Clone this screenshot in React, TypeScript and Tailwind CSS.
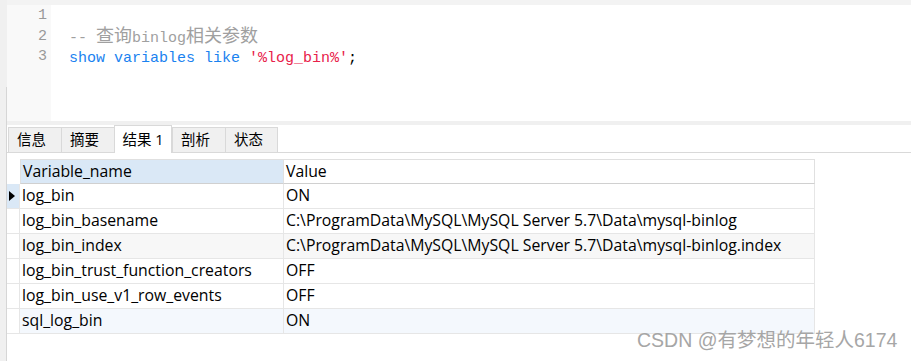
const rows = [
  { name: 'log_bin', value: 'ON', bg: 'bg-white', current: true },
  {
    name: 'log_bin_basename',
    value: 'C:\\ProgramData\\MySQL\\MySQL Server 5.7\\Data\\mysql-binlog',
    bg: 'bg-white',
  },
  {
    name: 'log_bin_index',
    value: 'C:\\ProgramData\\MySQL\\MySQL Server 5.7\\Data\\mysql-binlog.index',
    bg: 'bg-[#f7f7f7]',
  },
  { name: 'log_bin_trust_function_creators', value: 'OFF', bg: 'bg-white' },
  { name: 'log_bin_use_v1_row_events', value: 'OFF', bg: 'bg-white' },
  { name: 'sql_log_bin', value: 'ON', bg: 'bg-[#f4f8fd]' },
]

const tabs = ['信息', '摘要', '结果 1', '剖析', '状态']

const uiFont = "font-['Segoe_UI','Open_Sans','Noto_Sans_CJK_SC',sans-serif]"

export default function App() {
  return (
    <div className="relative flex h-[361px] w-[911px] overflow-hidden bg-white text-black">
      {/* Left frame strip */}
      <div className="flex w-[7px] flex-col bg-[#f0f0f0]">
        <div className="h-[87px]" />
        <div className="flex-1 border-r border-[#d6d6d6]" />
      </div>

      <div className="flex flex-1 flex-col">
        <div className="h-[5px] bg-[#f3f3f3]" />

        {/* Editor */}
        <div className="flex h-[116px] pt-[1px] font-['Liberation_Mono','Noto_Sans_CJK_SC',monospace] text-[15px] leading-[20.5px]">
          <div className="-mt-[1px] w-[44px] bg-[#f9f9f9] pt-[1px] pr-[4px] text-right text-[#999]">
            <div>1</div>
            <div>2</div>
            <div>3</div>
          </div>
          <div className="flex-1 pl-[18px]">
            <div>&nbsp;</div>
            <div className="text-[#a0a0a0]">
              -- <span className="text-[18px] leading-[20px]">查询</span>binlog
              <span className="text-[18px] leading-[20px]">相关参数</span>
            </div>
            <div>
              <span className="text-[#1a82f0]">show variables like </span>
              <span className="text-[#e8214a]">'%log_bin%'</span>
              <span>;</span>
            </div>
          </div>
        </div>

        <div className="h-[4px] bg-[#f0f0f0]" />

        {/* Tabs */}
        <div className={`flex h-[28px] items-end border-b border-[#d9d9d9] pl-[1px] text-[14.5px] ${uiFont}`}>
          {tabs.map((t, i) =>
            i === 2 ? (
              <div
                key={t}
                className="-mb-px flex h-[28px] w-[58px] items-center justify-center border border-b-0 border-[#d9d9d9] bg-white"
              >
                {t}
              </div>
            ) : (
              <div
                key={t}
                className="flex h-[25px] w-[53px] items-center pl-[8px] border border-b-0 border-r-0 border-[#d9d9d9] bg-[#f0f0f0] last:border-r"
              >
                {t}
              </div>
            )
          )}
        </div>

        {/* Result grid */}
        <div className={`mt-[6px] text-[15.8px] ${uiFont}`}>
          <div className="flex h-[25px]">
            <div className="w-[13px]" />
            <div className="flex w-[263px] items-center border-y border-l border-[#e0e0e0] border-b-[#d0d0d0] bg-[#dae8f6] pl-[2px]">
              Variable_name
            </div>
            <div className="flex w-[532px] items-center border border-[#e0e0e0] border-b-[#d0d0d0] pl-[2px]">
              Value
            </div>
          </div>
          {rows.map((r) => (
            <div key={r.name} className="flex h-[25px]">
              <div
                className={`flex w-[13px] items-center border-b border-r border-[#e6e6e6] ${
                  r.current ? 'bg-[#dae8f6]' : 'bg-white'
                }`}
              >
                {r.current && (
                  <svg width="6" height="10" viewBox="0 0 6 10" className="ml-[2px]">
                    <path d="M0 0 L6 5 L0 10 Z" fill="#000" />
                  </svg>
                )}
              </div>
              <div className={`flex w-[263px] items-center border-b border-[#e6e6e6] pl-[2px] ${r.bg}`}>
                {r.name}
              </div>
              <div
                className={`flex w-[532px] items-center border-x border-b border-[#e6e6e6] pl-[2px] ${r.bg}`}
              >
                {r.value}
              </div>
            </div>
          ))}
        </div>
      </div>

      <div className="absolute left-[637px] top-[326px] font-['Liberation_Sans','Noto_Sans_CJK_SC',sans-serif] text-[19.5px] text-[#a6a6a6]">
        CSDN @有梦想的年轻人6174
      </div>
    </div>
  )
}
